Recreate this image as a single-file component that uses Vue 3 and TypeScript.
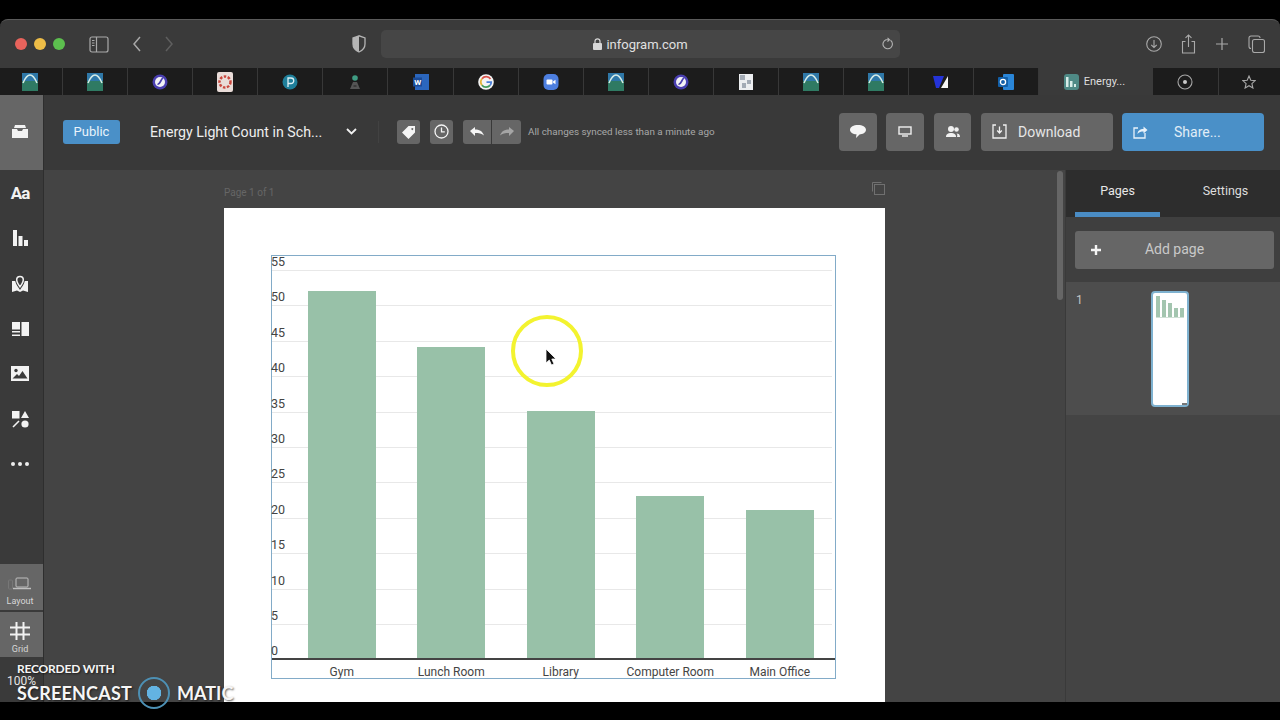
<script setup lang="ts">
type Fav = 'arc' | 'e' | 'canvas' | 'p' | 'person' | 'word' | 'g' | 'zoom' | 'qr' | 'slash' | 'outlook'

const tabs: Fav[] = ['arc', 'arc', 'e', 'canvas', 'p', 'person', 'word', 'g', 'zoom', 'arc', 'e', 'qr', 'arc', 'arc', 'slash', 'outlook']

const ticks = [55, 50, 45, 40, 35, 30, 25, 20, 15, 10, 5]
const unit = 7.06
const bars = [
  { label: 'Gym', value: 52 },
  { label: 'Lunch Room', value: 44 },
  { label: 'Library', value: 35 },
  { label: 'Computer Room', value: 23 },
  { label: 'Main Office', value: 21 }
]
const miniBars = [21, 17, 14, 9, 9]
</script>

<template>
  <div class="screen">
    <div class="chrome">
      <div class="lights">
        <span class="light red"></span>
        <span class="light yellow"></span>
        <span class="light green"></span>
      </div>
      <svg class="sidebar-ico" width="20" height="17" viewBox="0 0 20 17" fill="none" stroke="#a9a9a9" stroke-width="1.2">
        <rect x="1" y="1" width="18" height="15" rx="2" />
        <path d="M7.5 1v15M3 4.5h2.5M3 7h2.5M3 9.5h2.5" />
      </svg>
      <svg class="back" width="10" height="16" viewBox="0 0 10 16" fill="none" stroke="#a8a8a8" stroke-width="1.5"><path d="M8 1 2 8l6 7" /></svg>
      <svg class="forward" width="10" height="16" viewBox="0 0 10 16" fill="none" stroke="#5f5f5f" stroke-width="1.5"><path d="m2 1 6 7-6 7" /></svg>
      <svg class="shield" width="14" height="18" viewBox="0 0 14 18">
        <path d="M7 .8 1 3v6c0 4 3 6.700 6 8 3-1.300 6-4 6-8V3z" fill="none" stroke="#b5b5b5" stroke-width="1.300" />
        <path d="M7 .8 1 3v6c0 4 3 6.700 6 8z" fill="#b5b5b5" />
      </svg>
      <div class="url">
        <svg width="9" height="12" viewBox="0 0 9 12" fill="#d8d8d8"><rect y="5" width="9" height="7" rx="1" /><path d="M2 5V3.300a2.500 2.500 0 0 1 5 0V5" fill="none" stroke="#d8d8d8" stroke-width="1.200" /></svg>
        <span>infogram.com</span>
        <svg class="reload" width="12" height="14" viewBox="0 0 12 14" fill="none" stroke="#b3b3b3" stroke-width="1.100"><path d="M8.500 3.300A4.700 4.700 0 1 1 4 2.700h3M5.500 .8 7.500 2.700 5.500 4.600" /></svg>
      </div>
      <div class="chrome-right">
        <svg width="16" height="16" viewBox="0 0 16 16" fill="none" stroke="#a9a9a9" stroke-width="1.100"><circle cx="8" cy="8" r="7.300" /><path d="M8 4v7.500M5.200 8.800 8 11.500l2.800-2.700" /></svg>
        <svg width="15" height="20" viewBox="0 0 15 20" fill="none" stroke="#a9a9a9" stroke-width="1.100"><path d="M4.500 7.500H1.500v11.500h12V7.500h-3M7.500 13V1M4.500 3.800 7.500 1l3 2.800" /></svg>
        <svg width="14" height="14" viewBox="0 0 14 14" fill="none" stroke="#a9a9a9" stroke-width="1.200"><path d="M7 1v12M1 7h12" /></svg>
        <svg width="17" height="18" viewBox="0 0 17 18" fill="none" stroke="#a9a9a9" stroke-width="1.100"><rect x="4.500" y="4.500" width="12" height="13" rx="2" /><path d="M3 13.500A2 2 0 0 1 1 11.500V3a2 2 0 0 1 2-2h7a2 2 0 0 1 2 2" /></svg>
      </div>
    </div>

    <div class="tabs">
      <div v-for="(fav, i) in tabs" :key="i" class="tab" :class="{ first: i === 0 }">
        <svg width="16" height="20" viewBox="0 0 16 20">
          <template v-if="fav === 'arc'">
            <rect y="1" width="16" height="18" fill="#2f7a63" />
            <rect y="1" width="16" height="8" fill="#2f78a8" />
            <path d="M1 11c3-7 5-8 7-8s4 1 7 8" fill="none" stroke="#d6ece8" stroke-width="1.500" />
          </template>
          <template v-else-if="fav === 'e'">
            <circle cx="8" cy="10" r="7.500" fill="#4a3fb0" />
            <circle cx="8" cy="10" r="5" fill="#f2f2f6" />
            <path d="M5.500 12c3 1 3-5 5.500-6" fill="none" stroke="#4a3fb0" stroke-width="1.800" />
          </template>
          <template v-else-if="fav === 'canvas'">
            <rect x="0" y="0" width="16" height="20" rx="2" fill="#e9dcd8" />
            <circle cx="8" cy="10" r="5.500" fill="none" stroke="#c9463c" stroke-width="2.500" stroke-dasharray="2.500 1.500" />
          </template>
          <template v-else-if="fav === 'p'">
            <circle cx="8" cy="10" r="7.500" fill="#1f7f9a" />
            <path d="M6 15V6h3a2.500 2.500 0 0 1 0 5.500H6" fill="none" stroke="#dff1f6" stroke-width="1.300" />
          </template>
          <template v-else-if="fav === 'person'">
            <circle cx="8" cy="6" r="2.800" fill="#3f9c83" />
            <path d="M3 17 6 10h4l3 7z" fill="#555" />
            <path d="M6.500 14h3" stroke="#222" />
          </template>
          <template v-else-if="fav === 'word'">
            <rect x="2" y="2" width="14" height="16" fill="#2b66bd" />
            <rect x="0" y="5.500" width="9" height="9" fill="#1b4b97" />
            <text x="1.300" y="13" font-size="8" font-weight="700" fill="#fff" font-family="Roboto, sans-serif">W</text>
          </template>
          <template v-else-if="fav === 'g'">
            <circle cx="8" cy="10" r="7.800" fill="#f4f4f4" />
            <path d="M12.500 7A5.200 5.200 0 0 0 4 6.800" fill="none" stroke="#d9534a" stroke-width="1.800" />
            <path d="M4 6.800a5.200 5.200 0 0 0 0 6.400" fill="none" stroke="#e4b43a" stroke-width="1.800" />
            <path d="M4 13.200a5.200 5.200 0 0 0 8 .2" fill="none" stroke="#3f9a58" stroke-width="1.800" />
            <path d="M12 13.400c1-1 1.200-2 1.200-3.200H8.500" fill="none" stroke="#4a7fd8" stroke-width="1.800" />
          </template>
          <template v-else-if="fav === 'zoom'">
            <rect x="0.500" y="2" width="15" height="16" rx="5" fill="#4d7fe0" />
            <rect x="3.500" y="7.500" width="6" height="5" rx="1" fill="#fff" />
            <path d="m10 9.500 2.500-1.800v4.600L10 10.500z" fill="#fff" />
          </template>
          <template v-else-if="fav === 'qr'">
            <rect x="1" y="2" width="14" height="16" fill="#eceef0" />
            <path d="M2 3h5v5H2zM9 8h4v4H9zM4 11h4v5H4z" fill="#a3abb5" />
          </template>
          <template v-else-if="fav === 'slash'">
            <path d="M0 4h11L6 16H3z" fill="#2433d8" />
            <path d="M15 4v12H8z" fill="#f5f5f5" />
          </template>
          <template v-else>
            <rect x="5" y="2" width="11" height="16" rx="1" fill="#2a86d8" />
            <rect x="0" y="5" width="10" height="10" rx="1" fill="#125fa8" />
            <circle cx="5" cy="10" r="2.600" fill="none" stroke="#fff" stroke-width="1.300" />
          </template>
        </svg>
      </div>
      <div class="tab active">
        <span class="active-fav">
          <svg width="12" height="12" viewBox="0 0 12 12" fill="#d8ece8"><path d="M1 1h2.500v10H1zM5 5h2.500v6H5zM9 8h2v3H9z" /></svg>
        </span>
        <span>Energy...</span>
      </div>
      <div class="tab">
        <svg width="16" height="16" viewBox="0 0 16 16"><circle cx="8" cy="8" r="7" fill="none" stroke="#a7a7a7" stroke-width="1.100" /><circle cx="8" cy="8" r="2" fill="#c9c9c9" /></svg>
      </div>
      <div class="tab last">
        <svg width="14" height="14" viewBox="0 0 14 14" fill="none" stroke="#a7a7a7" stroke-width="1.100"><path d="m7 1 1.800 4.200 4.400.4-3.300 3 1 4.400L7 10.700 3.100 13l1-4.400-3.300-3 4.400-.4z" /></svg>
      </div>
    </div>

    <div class="body">
      <aside class="rail">
        <div class="rail-top">
          <svg width="16" height="13" viewBox="0 0 16 13" fill="#f2f2f2">
            <path d="M3 0h10l1 3H2z" />
            <path d="M0 4h5l1 2h4l1-2h5v9H0z" />
          </svg>
        </div>
        <div class="rail-list">
          <div class="rail-item"><span class="aa">Aa</span></div>
          <div class="rail-item">
            <svg width="15" height="16" viewBox="0 0 15 16" fill="#f2f2f2"><path d="M0 0h4v16H0zM5.500 6h4v10h-4zM11 10h4v6h-4z" /></svg>
          </div>
          <div class="rail-item">
            <svg width="16" height="17" viewBox="0 0 16 17">
              <path d="M0 6h3.200C4 10 6.500 12 8 15c1.500-3 4-5 4.800-9H16v11l-5-1.500-3 1.500-3-1.500L0 17z" fill="#f2f2f2" />
              <path d="M8 11.800C6.200 9.400 4.700 7.500 4.700 4.800a3.300 3.300 0 0 1 6.600 0c0 2.700-1.500 4.600-3.300 7z" fill="none" stroke="#f2f2f2" stroke-width="1.500" />
            </svg>
          </div>
          <div class="rail-item">
            <svg width="17" height="14" viewBox="0 0 17 14" fill="#f2f2f2"><path d="M0 0h8v7.500H0zM0 9h8v1.500H0zM0 12.500h8V14H0zM9.500 0H17v14H9.500z" /></svg>
          </div>
          <div class="rail-item">
            <svg width="18" height="15" viewBox="0 0 18 15">
              <rect width="18" height="15" fill="#f2f2f2" />
              <circle cx="5" cy="4.500" r="1.700" fill="#3a3a3a" />
              <path d="M1.500 12.500 6 8l2 2 3.500-5 5 7.500z" fill="#3a3a3a" />
            </svg>
          </div>
          <div class="rail-item">
            <svg width="17" height="17" viewBox="0 0 17 17" fill="#f2f2f2">
              <path d="M0 0h7.500v7.500H0zM13 0l4 7H9z" />
              <circle cx="13" cy="13" r="3.600" />
              <path d="m1 16 6-6" stroke="#f2f2f2" stroke-width="1.600" />
            </svg>
          </div>
          <div class="rail-item dots"><i></i><i></i><i></i></div>
        </div>
        <div class="rail-tool layout-tool">
          <svg width="24" height="13" viewBox="0 0 24 13" fill="none" stroke="#bfbfbf" stroke-width="1">
            <rect x="8" y="1" width="12" height="9" rx="1" />
            <path d="M5 11.500h18" stroke-width="1.500" />
            <rect x="0.500" y="3" width="4" height="9" rx="1" stroke="#777" />
          </svg>
          <span>Layout</span>
        </div>
        <div class="rail-tool">
          <svg width="20" height="18" viewBox="0 0 20 18" fill="none" stroke="#f2f2f2" stroke-width="2"><path d="M6.500 0v18M13.500 0v18M0 5.500h20M0 12.500h20" /></svg>
          <span>Grid</span>
        </div>
        <div class="zoom-level">100%</div>
      </aside>

      <div class="main">
        <header class="toolbar">
          <span class="public">Public</span>
          <span class="doc-title">Energy Light Count in Sch...</span>
          <svg class="chevron" width="11" height="7" viewBox="0 0 11 7" fill="none" stroke="#f0f0f0" stroke-width="1.800"><path d="m1 1 4.500 4.500L10 1" /></svg>
          <span class="divider"></span>
          <button class="sq tag">
            <svg width="15" height="14" viewBox="0 0 15 14" fill="#f5f5f5"><path d="M7.500 1H14v6.500L7.500 14 1 7.500zM11.300 3a1 1 0 1 0 .01 0z" fill-rule="evenodd" /></svg>
          </button>
          <button class="sq clock">
            <svg width="15" height="15" viewBox="0 0 15 15" fill="none" stroke="#f5f5f5" stroke-width="1.300"><circle cx="7.500" cy="7.500" r="6.500" /><path d="M7.500 3.500v4.300h3.300" /></svg>
          </button>
          <button class="sq undo">
            <svg width="14" height="9" viewBox="0 0 14 9" fill="#f5f5f5"><path d="M0 4 5 0v2.500C9 2.500 12.500 4 14 8.500 11.500 6.500 9 6 5 6v3z" /></svg>
          </button>
          <button class="sq redo">
            <svg width="14" height="9" viewBox="0 0 14 9" fill="#a5a5a5"><path d="M14 4 9 0v2.500C5 2.500 1.500 4 0 8.500 2.500 6.500 5 6 9 6v3z" /></svg>
          </button>
          <span class="synced">All changes synced less than a minute ago</span>
          <button class="big-sq comment">
            <svg width="16" height="13" viewBox="0 0 16 13" fill="#f5f5f5"><path d="M8 0c4.400 0 8 1.900 8 4.700S12.400 9.400 9.500 9.400L6 13l.5-3.700C2.800 9 0 7.500 0 4.700S3.600 0 8 0z" /></svg>
          </button>
          <button class="big-sq screen-btn">
            <svg width="14" height="11" viewBox="0 0 14 11" fill="none" stroke="#f0f0f0" stroke-width="1.400"><rect x="1" y="1" width="12" height="7" /><path d="M4 10h6" /></svg>
          </button>
          <button class="big-sq people">
            <svg width="14" height="11" viewBox="0 0 14 11" fill="#f0f0f0"><circle cx="5" cy="3" r="3" /><path d="M0 11c0-3 2-4 5-4s5 1 5 4z" /><circle cx="10.500" cy="3.500" r="2.300" /><path d="M11 11h3c0-2.500-1.200-3.500-3.500-3.500 1 1 1 2 .5 3.500z" /></svg>
          </button>
          <button class="wide download">
            <svg width="15" height="15" viewBox="0 0 15 15" fill="none" stroke="#f0f0f0" stroke-width="1.300"><path d="M4 1H1v13h13V1h-3M7.500 2.500v6M5.200 6.500l2.300 2.500 2.300-2.500" /></svg>
            <span>Download</span>
          </button>
          <button class="wide share">
            <svg width="15" height="14" viewBox="0 0 15 14" fill="none" stroke="#e8f2fa" stroke-width="1.300"><path d="M5 3H1v10h11V8" /><path d="M4.500 9c0-3 2.500-5 6-5V1.500L14.500 5 10.500 8.500V6.500c-2.500 0-4.500.5-6 2.500z" fill="#e8f2fa" stroke="none" /></svg>
            <span>Share...</span>
          </button>
        </header>

        <div class="work">
          <section class="canvas">
            <div class="page-meta">
              <span>Page 1 of 1</span>
              <svg width="14" height="14" viewBox="0 0 14 14" fill="none" stroke="#707070" stroke-width="1"><rect x="3.500" y="3.500" width="10" height="10" /><path d="M1.500 10.500V1.500h9" /></svg>
            </div>
            <div class="sheet">
              <div class="chart">
                <div class="plot">
                  <div v-for="t in ticks" :key="t" class="tick">
                    <span>{{ t }}</span>
                  </div>
                  <span class="zero">0</span>
                  <div class="bars">
                    <div class="slot" v-for="b in bars" :key="b.label">
                      <div class="bar" :style="{ height: b.value * unit + 'px' }"></div>
                    </div>
                  </div>
                </div>
                <div class="cats">
                  <span v-for="b in bars" :key="b.label" class="slot">{{ b.label }}</span>
                </div>
              </div>
            </div>
            <div class="scrollbar"></div>
          </section>

          <aside class="panel">
            <div class="panel-tabs">
              <span class="panel-tab on">Pages</span>
              <span class="panel-tab">Settings</span>
            </div>
            <div class="add-wrap">
              <button class="add-page">
                <svg width="12" height="12" viewBox="0 0 12 12" fill="none" stroke="#f5f5f5" stroke-width="2.400"><path d="M6 1v10M1 6h10" /></svg>
                <span>Add page</span>
              </button>
            </div>
            <div class="page-row">
              <span class="page-no">1</span>
              <div class="thumb">
                <div class="mini">
                  <i v-for="(h, i) in miniBars" :key="i" :style="{ height: h + 'px' }"></i>
                </div>
                <span class="thumb-foot"></span>
              </div>
            </div>
          </aside>
        </div>
      </div>
    </div>

    <div class="ring"></div>
    <svg class="pointer" width="11" height="18" viewBox="0 0 11 18"><path d="M1 1v14l3.300-3 2.200 5 2.500-1-2.200-5H11z" fill="#111" stroke="#fff" stroke-width=".8" /></svg>

    <div class="mark">
      <div class="mark-top">RECORDED WITH</div>
      <div class="mark-row">
        <span class="mark-word">SCREENCAST</span>
        <i class="mark-logo"></i>
        <span>MATIC</span>
      </div>
    </div>
  </div>
</template>

<style>
html,
body {
  margin: 0;
  background: #000;
}
</style>

<style scoped>
.screen {
  position: relative;
  width: 1280px;
  height: 720px;
  box-sizing: border-box;
  padding: 19px 0 18px;
  background: #000;
  overflow: hidden;
  display: flex;
  flex-direction: column;
  font-family: Roboto, "Liberation Sans", sans-serif;
}
button {
  border: 0;
  padding: 0;
  font: inherit;
  display: flex;
  align-items: center;
  justify-content: center;
}

.chrome {
  height: 49px;
  flex: none;
  display: flex;
  align-items: center;
  background: #3a3a3a;
  border-top: 1px solid #5a5a5a;
  border-radius: 8px 8px 0 0;
  box-sizing: border-box;
}
.lights {
  display: flex;
  gap: 7px;
  margin-left: 15px;
}
.light {
  width: 12px;
  height: 12px;
  border-radius: 50%;
}
.red { background: #e8635c; }
.yellow { background: #eebd47; }
.green { background: #5cbf4e; }
.sidebar-ico { margin-left: 24px; }
.back { margin-left: 23px; }
.forward { margin-left: 22px; }
.shield { margin-left: 178px; }
.url {
  position: relative;
  margin-left: 15px;
  width: 519px;
  height: 28px;
  border-radius: 5px;
  background: #464646;
  display: flex;
  align-items: center;
  justify-content: center;
  gap: 4px;
  font-size: 13px;
  color: #e0e0e0;
}
.reload {
  position: absolute;
  right: 6px;
  top: 7px;
}
.chrome-right {
  display: flex;
  align-items: center;
  gap: 19px;
  margin-left: 246px;
}

.tabs {
  height: 27px;
  flex: none;
  display: flex;
  background: #1c1c1c;
}
.tab {
  width: 65.1px;
  flex: none;
  display: flex;
  align-items: center;
  justify-content: center;
  box-sizing: border-box;
  border-right: 1px solid #383838;
}
.tab.first { width: 63px; padding-right: 3px; }
.tab.last { flex: 1; width: auto; border-right: 0; }
.tab.active {
  width: 114px;
  gap: 5px;
  padding-right: 4px;
  background: #3a3a3a;
  color: #dedede;
  font-size: 11px;
  border-right: 0;
}
.active-fav {
  width: 15px;
  height: 16px;
  border-radius: 3px;
  background: #4f8a86;
  display: flex;
  align-items: center;
  justify-content: center;
}

.body {
  flex: 1;
  display: flex;
  min-height: 0;
}
.rail {
  position: relative;
  width: 44px;
  flex: none;
  display: flex;
  flex-direction: column;
  background: #3a3a3a;
  border-right: 1px solid #2e2e2e;
  box-sizing: border-box;
}
.rail-top {
  height: 75px;
  flex: none;
  background: #666;
  display: flex;
  align-items: center;
  justify-content: center;
  padding: 0 3px 2px 0;
  box-sizing: border-box;
}
.rail-list {
  height: 394px;
  flex: none;
}
.rail-item {
  height: 45.3px;
  padding-right: 3px;
  display: flex;
  align-items: center;
  justify-content: center;
}
.aa {
  font-size: 17px;
  font-weight: 700;
  color: #f2f2f2;
  letter-spacing: -1px;
}
.dots { gap: 3px; }
.dots i {
  width: 4px;
  height: 4px;
  border-radius: 50%;
  background: #eee;
}
.rail-tool {
  height: 45px;
  flex: none;
  margin-bottom: 2px;
  padding: 0 3px 3px 0;
  background: #666;
  display: flex;
  flex-direction: column;
  align-items: center;
  justify-content: flex-end;
  gap: 4px;
  box-sizing: border-box;
  font-size: 9px;
  color: #d6d6d6;
}
.layout-tool {
  height: 46px;
  gap: 6px;
  padding-bottom: 4px;
}
.zoom-level {
  position: absolute;
  left: 7px;
  top: 579px;
  font-size: 12px;
  color: #e5e5e5;
}

.main {
  flex: 1;
  min-width: 0;
  display: flex;
  flex-direction: column;
}
.toolbar {
  height: 75px;
  flex: none;
  display: flex;
  align-items: center;
  background: #393939;
  padding: 0 0 2px 19px;
  box-sizing: border-box;
}
.public {
  width: 57px;
  height: 24px;
  border-radius: 3px;
  background: #4a90c8;
  color: #e9f3fb;
  font-size: 13px;
  display: flex;
  align-items: center;
  justify-content: center;
}
.doc-title {
  width: 172px;
  margin-left: 30px;
  font-size: 14.2px;
  color: #eee;
  white-space: nowrap;
}
.chevron { margin-left: 24px; }
.divider {
  width: 1px;
  height: 22px;
  margin: 0 18px 0 21px;
  background: #424242;
}
.sq {
  height: 24px;
  width: 23px;
  border-radius: 3px;
  background: #666;
}
.clock { margin-left: 10px; }
.undo {
  width: 28px;
  margin-left: 10px;
  border-radius: 3px 0 0 3px;
}
.redo {
  width: 29px;
  margin-left: 1px;
  border-radius: 0 3px 3px 0;
}
.synced {
  width: 311px;
  margin-left: 7px;
  font-size: 9.9px;
  color: #a8a8a8;
  white-space: nowrap;
}
.big-sq {
  width: 38px;
  height: 38px;
  margin-right: 9px;
  border-radius: 4px;
  background: #666;
}
.screen-btn { margin-right: 10px; }
.people {
  width: 37px;
  margin-right: 10px;
}
.wide {
  height: 38px;
  border-radius: 4px;
  justify-content: flex-start;
  font-size: 14px;
}
.download {
  width: 132px;
  padding-left: 11px;
  gap: 11px;
  background: #666;
  color: #e6e6e6;
}
.share {
  width: 142px;
  margin-left: 9px;
  padding-left: 11px;
  gap: 26px;
  background: #4a90c8;
  color: #e0edf7;
}

.work {
  flex: 1;
  display: flex;
  min-height: 0;
}
.canvas {
  position: relative;
  width: 1021px;
  flex: none;
  padding-left: 180px;
  box-sizing: border-box;
  background: #444;
  overflow: hidden;
}
.page-meta {
  width: 661px;
  height: 38px;
  display: flex;
  justify-content: space-between;
  align-items: flex-start;
  padding: 17px 0 0;
  box-sizing: border-box;
  font-size: 10px;
  color: #666;
}
.page-meta svg {
  margin: -6px 0 0;
}
.sheet {
  width: 661px;
  height: 494px;
  padding: 47px 49px 0 47px;
  box-sizing: border-box;
  background: #fff;
}
.chart {
  width: 565px;
  height: 424px;
  box-sizing: border-box;
  border: 1px solid #82abc8;
  color: #444;
}
.plot {
  position: relative;
  height: 404px;
  padding-top: 14px;
  box-sizing: border-box;
  border-bottom: 2px solid #444;
}
.tick {
  height: 35.400px;
  box-sizing: border-box;
  border-top: 1px solid #e8e8e8;
  margin-right: 3px;
  position: relative;
  font-size: 12.5px;
}
.tick span {
  position: absolute;
  left: -1px;
  top: -16px;
  line-height: 14px;
}
.zero {
  position: absolute;
  left: -1px;
  bottom: 0;
  font-size: 12.5px;
  line-height: 14px;
}
.bars {
  position: absolute;
  left: 15px;
  right: 0;
  bottom: 0;
  display: flex;
  align-items: flex-end;
}
.slot {
  width: 109.500px;
  flex: none;
  display: flex;
  justify-content: center;
}
.bar {
  width: 68px;
  background: #98c1a8;
}
.cats {
  height: 18px;
  padding: 5px 0 0 15px;
  box-sizing: border-box;
  display: flex;
  align-items: center;
  font-size: 12px;
  white-space: nowrap;
}
.scrollbar {
  position: absolute;
  left: 1013px;
  top: 1px;
  width: 6px;
  height: 129px;
  border-radius: 3px;
  background: #666;
}

.panel {
  flex: 1;
  background: #444;
  border-left: 1px solid #3a3a3a;
  box-sizing: border-box;
}
.panel-tabs {
  height: 47px;
  padding-left: 9px;
  background: #2d2d2d;
  display: flex;
}
.panel-tab {
  width: 85px;
  margin-right: 23px;
  height: 47px;
  box-sizing: border-box;
  padding-top: 13px;
  text-align: center;
  font-size: 12.500px;
  color: #ddd;
}
.panel-tab.on {
  border-bottom: 5px solid #4a8cc4;
  color: #e8e8e8;
}
.add-wrap {
  padding: 14px 6px 13px 9px;
  background: #3f3f3f;
}
.add-page {
  position: relative;
  width: 199px;
  height: 38px;
  padding-bottom: 2px;
  box-sizing: border-box;
  border-radius: 3px;
  background: #666;
  color: #c9c9c9;
  font-size: 14px;
}
.add-page svg {
  position: absolute;
  left: 15px;
  top: 13px;
}
.page-row {
  height: 133px;
  background: #4d4d4d;
  padding: 9px 0 0 10px;
  box-sizing: border-box;
  display: flex;
}
.page-no {
  width: 75px;
  padding-top: 2px;
  font-size: 12px;
  color: #c4c4c4;
}
.thumb {
  position: relative;
  width: 38px;
  height: 116px;
  box-sizing: border-box;
  border: 2px solid #7fb2d0;
  border-radius: 4px;
  background: #fff;
  padding: 3px 3px 0;
}
.mini {
  height: 21px;
  display: flex;
  align-items: flex-end;
  gap: 2px;
  border-bottom: 1px solid #cfe0d5;
}
.mini i {
  width: 4px;
  background: #a3c5af;
}
.thumb-foot {
  position: absolute;
  right: 0;
  bottom: 0;
  width: 5px;
  height: 2px;
  background: #777;
}

.ring {
  position: absolute;
  left: 511px;
  top: 315px;
  width: 72px;
  height: 72px;
  box-sizing: border-box;
  border: 4px solid #f3f32f;
  border-radius: 50%;
}
.pointer {
  position: absolute;
  left: 545px;
  top: 348px;
}

.mark {
  position: absolute;
  left: 17px;
  top: 661px;
  color: #f6f6f6;
  font-family: Lato, Roboto, sans-serif;
  text-shadow: 1px 1px 2px rgba(0, 0, 0, .6);
}
.mark-top {
  font-size: 12px;
  font-weight: 700;
  line-height: 15px;
  letter-spacing: -.2px;
}
.mark-row {
  display: flex;
  align-items: center;
  font-size: 18px;
  font-weight: 700;
  margin-top: 4px;
}
.mark-word {
  letter-spacing: .2px;
}
.mark-logo {
  width: 32px;
  height: 32px;
  box-sizing: border-box;
  margin: -3px 7px -3px 6px;
  border: 2.500px solid #4d90b4;
  border-radius: 50%;
  background: radial-gradient(circle, #63b3e2 0 7px, transparent 7.500px);
}
</style>
